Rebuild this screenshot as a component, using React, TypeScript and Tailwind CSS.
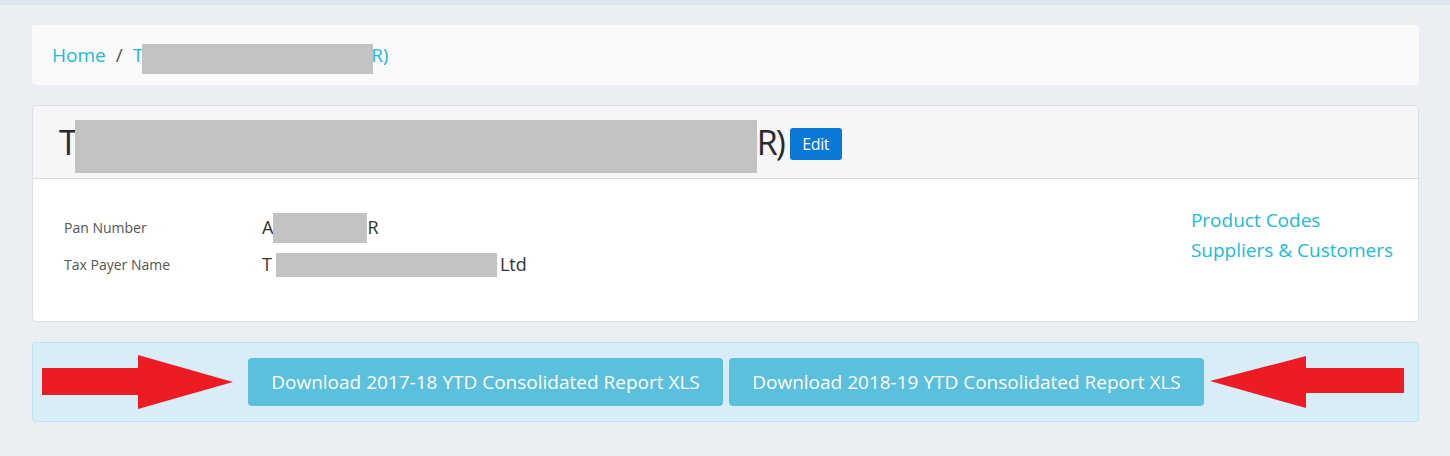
import React from "react"

const FONT = { fontFamily: '"Open Sans", "Noto Sans", sans-serif' }

function Redact({ w, h, className = "" }: { w: string; h: string; className?: string }) {
  return <span className={`inline-block bg-[#c3c3c3] align-middle ${w} ${h} ${className}`} />
}

function ArrowRight() {
  return (
    <svg width="192" height="54" viewBox="0 0 192 54" className="shrink-0">
      <polygon points="0,13 96,13 96,0 191,27 96,54 96,40 0,40" fill="#ed1c24" />
    </svg>
  )
}

function ArrowLeft() {
  return (
    <svg width="194" height="52" viewBox="0 0 194 52" className="shrink-0">
      <polygon points="0,25 96,0 96,12 194,12 194,37 96,37 96,52" fill="#ed1c24" />
    </svg>
  )
}

export default function App() {
  return (
    <div className="min-h-screen bg-[#ebeef3] text-[#333]" style={FONT}>
      <div className="h-[5px] bg-[#dfe5ee]" />
      <div className="px-[32px] pr-[31px] pt-[20px] flex flex-col">
        {/* breadcrumb */}
        <div className="h-[60px] bg-[#fafafa] rounded-[4px] flex items-center px-[20px] text-[19px]">
          <a className="text-[#22bad6]">Home</a>
          <span className="mx-[10px] text-[#555]">/</span>
          <span className="text-[#22bad6] flex items-center">
            T<Redact w="w-[231px]" h="h-[30px]" className="mt-[8px] -ml-[1px] mr-[-2px]" />R)
          </span>
        </div>

        {/* details card */}
        <div className="mt-[20px] bg-white border border-[#dcdfe3] rounded-[4px] overflow-hidden">
          <div className="h-[73px] bg-[#f6f6f8] border-b border-[#dcdcdc] flex items-center pl-[26px]">
            <h1 className="text-[34px] leading-none flex items-center text-[#2b2b2b]">
              T<Redact w="w-[682px]" h="h-[53px]" className="mt-[8px] -ml-[3px]" />
              <span className="tracking-[-2px]">R)</span>
            </h1>
            <button className="ml-[6px] mt-[4px] h-[32px] w-[52px] rounded-[3px] bg-[#0a78d7] text-white text-[16px] tracking-tight">
              Edit
            </button>
          </div>
          <div className="h-[142px] flex justify-between items-start pl-[31px] pr-[25px] pt-[30px]">
            <div className="grid grid-cols-[198px_1fr] auto-rows-[37px] items-center">
              <span className="text-[14px] text-[#555]">Pan Number</span>
              <span className="text-[18px] flex items-center">
                A<Redact w="w-[94px]" h="h-[30px]" />R
              </span>
              <span className="text-[14px] text-[#555]">Tax Payer Name</span>
              <span className="text-[18px] flex items-center">
                T<Redact w="w-[221px]" h="h-[24px]" className="ml-[4px] mr-[3px]" />Ltd
              </span>
            </div>
            <div className="flex flex-col text-[19px] text-[#22bad6] leading-[30px] -mt-[4px]">
              <a>Product Codes</a>
              <a>Suppliers &amp; Customers</a>
            </div>
          </div>
        </div>

        {/* downloads */}
        <div className="mt-[20px] h-[80px] bg-[#d9edf7] border border-[#bce3f1] rounded-[4px] flex items-center pl-[9px]">
          <ArrowRight />
          <div className="ml-[14px] flex gap-[6px]">
            <button className="h-[48px] w-[475px] rounded-[4px] bg-[#5bc0de] text-white text-[19px]">
              Download 2017-18 YTD Consolidated Report XLS
            </button>
            <button className="h-[48px] w-[475px] rounded-[4px] bg-[#5bc0de] text-white text-[19px]">
              Download 2018-19 YTD Consolidated Report XLS
            </button>
          </div>
          <div className="ml-[6px]">
            <ArrowLeft />
          </div>
        </div>
      </div>
    </div>
  )
}
